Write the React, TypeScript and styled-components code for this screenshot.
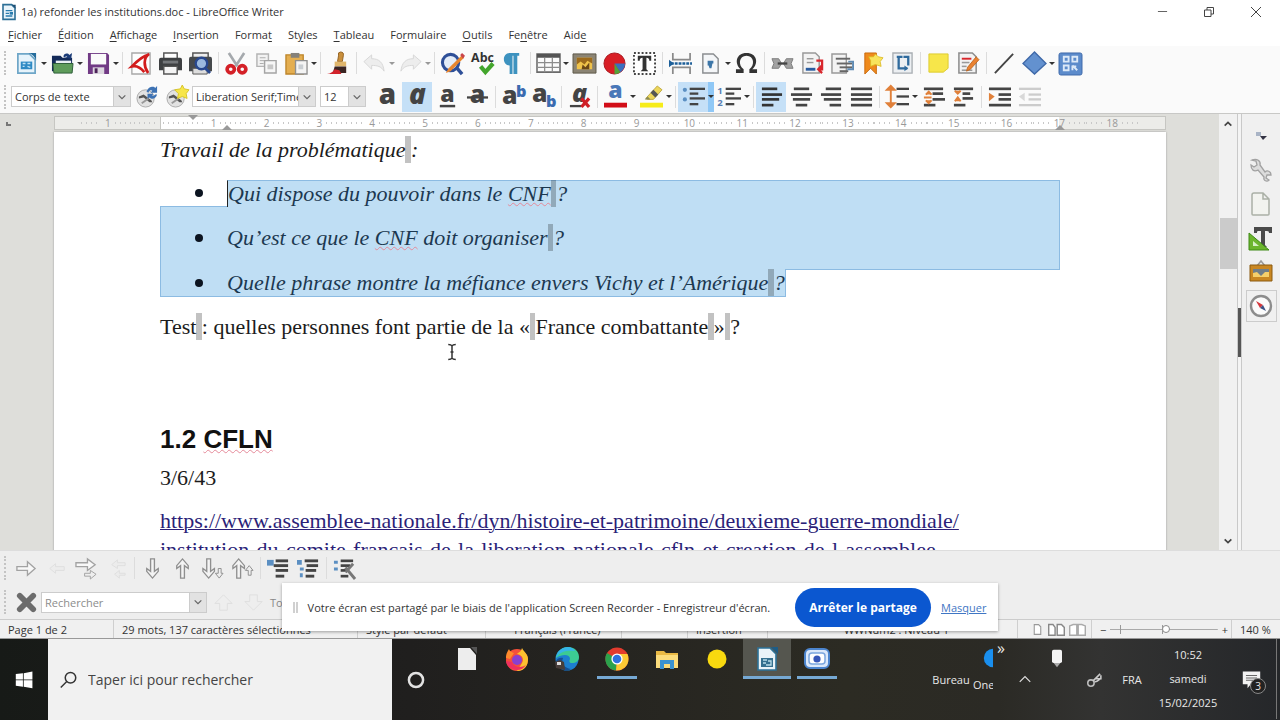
import React from 'react';
import styled, { createGlobalStyle, css } from 'styled-components';

const ui = '"Open Sans", "Noto Sans", sans-serif';

const GlobalStyle = createGlobalStyle`
  * { box-sizing: border-box; }
  body { margin: 0; font-family: ${ui}; font-size: 11px; color: #333; background: #fff; }
  button, input { font: inherit; color: inherit; padding: 0; margin: 0; border: 0; background: none; min-width: 0; }
  p, ul, h1, h2 { margin: 0; padding: 0; }
  svg { display: block; flex: none; overflow: visible; }
`;

/* ---------- icon drawings, all on a 24 x 24 grid ---------- */

const dark = '#444';
const sheet = <path d="M4 2h11l5 5v15H4z" fill="#f4f6f8" stroke="#8a8d90" strokeWidth="1.5" />;
const lines = (rows: number[][], color = dark, width = 2.4) =>
  rows.map(([x1, x2, y]) => <path key={y} d={`M${x1} ${y}H${x2}`} stroke={color} strokeWidth={width} />);
const letter = (size = 23, x = 12, y = 18, fill = dark, italic = false) => (
  <text x={x} y={y} textAnchor="middle" fontFamily="Open Sans, sans-serif" fontWeight="800" fontSize={size}
    fontStyle={italic ? 'italic' : 'normal'} fill={fill}>a</text>
);
const styleDisc = (
  <>
    <circle cx="10" cy="14" r="9" fill="#e2e2e2" stroke="#aaa" />
    <path d="M3 12l5-2 8 6 1 2-3 0-6-5-5 1z" fill="#555" />
    <path d="M6 19l7-5" stroke="#999" strokeWidth="2" />
  </>
);
const arrowDown = 'M10 2h4v13l4-3v3l-6 7-6-7v-3l4 3z';

const icons: Record<string, React.ReactNode> = {
  writer: <><path d="M3 1h13l5 5v17H3z" fill="#e9f4fa" stroke="#2c6f96" strokeWidth="2.4" /><path d="M16 1l6 0v6z" fill="#1d4f74" /><path d="M7 10h10M7 14h5M7 18h10" stroke="#2a7cae" strokeWidth="2" /><path d="M13 12h5v4h-5z" fill="#2a7cae" /></>,
  newDoc: <><path d="M3 2h12l6 6v14H3z" fill="#e6f3fb" stroke="#6ea6c8" strokeWidth="1.8" /><path d="M14 1h8v8c-1-4-4-7-8-8z" fill="#256c9c" /><path d="M6 10h12v8H6z" fill="#2e8ac4" /><path d="M8 12h3M8 15h2M13 12h3M13 15l3 1" stroke="#bfe2f5" strokeWidth="1.4" /></>,
  open: <><path d="M1 4h9l2 2h10v14H1z" fill="#132a58" /><path d="M13 5c0-4 5-4 6-2l3-2-1 6-6-1 2-1c-1-1-2-1-2 1z" fill="#1c3c78" /><path d="M5 9h16v4H5z" fill="#e8eef4" /><path d="M2 12h21l-1 10H3z" fill="#5f9c5b" stroke="#2c5c38" /></>,
  save: <><path d="M1 1h20l2 2v20H1z" fill="#713a85" /><path d="M4 2h16v11H4z" fill="#fafafa" /><path d="M6 16h12v7H6z" fill="#dcd7df" /><path d="M8 17h3v5H8z" fill="#4c2259" /></>,
  pdf: <><path d="M3 1h19v22H3z" fill="#fdfdfd" stroke="#a8a8a8" strokeWidth="1.4" /><path d="M21 2C15 6 15 15 20 22M20 3C15 4 10 8 3 15c4-1 9 1 13 6" fill="none" stroke="#d21c1c" strokeWidth="2.8" /></>,
  print: <><path d="M5 1h14v8H5z" fill="#fff" stroke="#555" strokeWidth="1.5" /><path d="M0 8q0-2 2-2h20q2 0 2 2v11H0z" fill="#3e4042" /><path d="M4 9h16v3H4z" fill="#74777a" /><path d="M5 15h14v8H5z" fill="#f4f4f4" stroke="#555" strokeWidth="1.5" /></>,
  preview: <><path d="M4 1h16v6H4z" fill="#eee" stroke="#555" strokeWidth="1.5" /><path d="M0 7q0-2 2-2h20q2 0 2 2v13H0z" fill="#46494c" /><path d="M4 17h15v6H4z" fill="#ddd" stroke="#555" /><circle cx="13" cy="12" r="6" fill="#9bb9de" stroke="#28488f" strokeWidth="2.4" /><path d="M17 17l5 5" stroke="#28488f" strokeWidth="3" /></>,
  cut: <><path d="M4 1l9 14M20 1l-9 14" stroke="#a5a9ad" strokeWidth="2.8" /><circle cx="6" cy="18" r="3.8" fill="none" stroke="#d42027" strokeWidth="3.8" /><circle cx="18" cy="18" r="3.8" fill="none" stroke="#d42027" strokeWidth="3.8" /></>,
  copy: <><path d="M2 2h12v13H2z" fill="#f2f2f2" stroke="#b4b4b4" strokeWidth="1.5" /><path d="M5 6h6M5 9h6M5 12h4" stroke="#aaa" /><path d="M10 9h12v13H10z" fill="#f6f6f6" stroke="#a4a4a4" strokeWidth="1.5" /><path d="M13 13h6v5h-6z" fill="#c7c7c7" /></>,
  paste: <><path d="M1 3h18v20H1z" fill="#e4ae50" stroke="#bd852a" strokeWidth="1.4" /><path d="M6 1h9v5H6z" fill="#85817a" /><path d="M11 9h12v14H11z" fill="#f4f4f4" stroke="#8f8f8f" strokeWidth="1.4" /><path d="M14 13h5v5h-5z" fill="#c9ced2" /></>,
  brush: <><path d="M14 0q4 0 3 4l-1 6h-5l1-6q-1-4 2-4z" fill="#c98f3c" stroke="#936222" /><path d="M8 10h12v5H8z" fill="#e0b66c" /><path d="M8 15h12v7H6z" fill="#3a2422" /><path d="M0 23q6-1 8-5l5 1 2 4z" fill="#d2232b" /></>,
  undo: <path d="M1 10l8-7v4c8 0 12 4 13 13-3-5-7-6-13-6v4z" fill="#ededed" stroke="#d6d6d6" />,
  redo: <path d="M23 10l-8-7v4C7 7 3 11 2 20c3-5 7-6 13-6v4z" fill="#ededed" stroke="#d6d6d6" />,
  find: <><circle cx="10" cy="11" r="8.5" fill="#e3ecf8" stroke="#2e4f98" strokeWidth="3.2" /><path d="M16 16l6 7" stroke="#2e4f98" strokeWidth="3.6" /><path d="M22 3L8 17l-3 5 5-2L24 6z" fill="#e8862e" /><path d="M20 3l3 4 2-3-3-3z" fill="#c9454a" /></>,
  spell: <><text x="12" y="10" textAnchor="middle" fontFamily="Open Sans, sans-serif" fontWeight="700" fontSize="13" fill="#333">Abc</text><path d="M10 15l5 6 8-9" fill="none" stroke="#43a52c" strokeWidth="4.4" /></>,
  pilcrow: <path d="M19 1v3h-2v19h-4V4h-1v19H9v-9C1 14 1 1 9 1z" fill="#3d92bf" />,
  table: <><path d="M0 2h24v19H0z" fill="#fbfbfb" stroke="#6a6a6a" strokeWidth="1.6" /><path d="M0 2h24v4H0z" fill="#555" /><path d="M0 11h24M0 16h24M8 6v15M16 6v15" stroke="#8c8c8c" strokeWidth="1.3" /></>,
  image: <><path d="M0 2h24v20H0z" fill="#8b8474" stroke="#5d5849" /><path d="M4 6h16v12H4z" fill="#f0c34a" /><path d="M4 6h16v6l-5-3-3 4-4-3-4 3z" fill="#9c6a1c" /><path d="M10 13l3 3 4-5v7H9z" fill="#6b4716" /></>,
  chart: <><circle cx="12" cy="12" r="11" fill="#d81e25" stroke="#a8161c" /><path d="M12 12h11A11 11 0 0 1 18 21z" fill="#3a6fc0" /><path d="M12 12l6 9a11 11 0 0 1-6 2z" fill="#53a53a" /></>,
  textBox: <><path d="M1 1h22v22H1z" fill="#fff" stroke="#444" strokeWidth="2" strokeDasharray="2 2" /><path d="M5 4h14v5h-2c0-2-1-3-3-3v12l2 2H8l2-2V6C8 6 7 7 7 9H5z" fill="#333" /></>,
  pageBreak: <><path d="M4 1v7h18V1M4 23v-7h18v7" fill="none" stroke="#8a8a8a" strokeWidth="1.8" /><path d="M2 12h22" stroke="#1d5f99" strokeWidth="2.4" strokeDasharray="3 1" /><path d="M0 8l5 4-5 4z" fill="#1d5f99" /></>,
  field: <>{sheet}<path d="M9 9h6v3h-1l-1 5h-2l-1-3H9z" fill="#3c76a8" /></>,
  omega: <path d="M1 22v-4h5C-1 12 1 1 12 1s13 11 6 17h5v4h-8v-4c6-4 5-14-3-14s-9 10-3 14v4z" fill="#333" />,
  link: <><path d="M1 7h7l3 5-3 5H1l2-5zM23 7h-7l-3 5 3 5h7l-2-5z" fill="#a2a2a2" stroke="#7c7c7c" /><path d="M7 12h10" stroke="#444" strokeWidth="2.4" /></>,
  footnote: <><path d="M2 1h13l4 4v17H2z" fill="#f3f3f3" stroke="#999" strokeWidth="1.5" />{lines([[6, 13, 7], [6, 13, 11]], '#999', 1.5)}{lines([[5, 15, 18]], '#2a5ca0', 3)}<path d="M16 9h6v9h-3M22 14l-4 4 4 4" fill="none" stroke="#d8262c" strokeWidth="2.4" /></>,
  endnote: <><path d="M1 2h15v20H1z" fill="#f3f3f3" stroke="#999" strokeWidth="1.5" />{lines([[5, 20, 7], [6, 22, 12], [9, 22, 16], [9, 18, 20]], '#666', 2)}<path d="M18 10h5v8h-6" fill="none" stroke="#5f8bb4" strokeWidth="2" /></>,
  bookmark: <><path d="M4 1h12v22l-6-6-6 6z" fill="#ef8a1c" stroke="#c96a0d" /><path d="M15 2l3 3 5 1-3 4 1 5-6-2-5 2 0-6-2-4 5 0z" fill="#f8e45c" stroke="#d9b51c" strokeWidth=".8" /></>,
  crossRef: <><path d="M2 1h20v21H2z" fill="#eceff2" stroke="#a8adb2" strokeWidth="1.4" /><path d="M6 5h6M8 5v12h9M13 5h5v9" fill="none" stroke="#2f6a9d" strokeWidth="2.4" /><path d="M14 14l4 3-4 3z" fill="#2f6a9d" /></>,
  comment: <path d="M2 2h20v15l-5 4H2z" fill="#f7e64a" stroke="#dccb2e" />,
  track: <><path d="M2 1h14l4 4v17H2z" fill="#f3f3f3" stroke="#8e8e8e" strokeWidth="1.6" />{lines([[5, 15, 7]], '#d8262c', 2)}{lines([[5, 13, 11], [5, 10, 15], [5, 16, 19]], '#999', 1.6)}<path d="M20 5l3 3-9 10-4 2 1-4z" fill="#e98231" stroke="#b85e17" strokeWidth=".8" /></>,
  line: <path d="M2 22L21 2" stroke="#444" strokeWidth="2" />,
  shape: <path d="M12 0l12 12-12 11L0 12z" fill="#6391cf" stroke="#3e68a8" strokeWidth="1.4" />,
  form: <><rect x="0" y="1" width="24" height="23" rx="2" fill="#5c8bcb" stroke="#3e69a9" /><path d="M5 5h5v5H5zM5 14h5v5H5zM14 5h5v5h-5zM14 14l5 5M14 19v-4h4" fill="none" stroke="#dce9f8" strokeWidth="2" /></>,

  updateStyle: <>{styleDisc}<path d="M11 7c2-6 8-6 9-4l2-2v7h-7l2-2c-1-1-3-1-4 2zM22 10c-1 4-5 6-8 3l-2 1V9h6l-1 2c1 1 2 0 3-1z" fill="#3d72b4" /></>,
  newStyle: <>{styleDisc}<path d="M17 0l2 4 5 1-3 4 1 5-5-2-5 2 1-5-4-4 6-1z" fill="#f7e64a" stroke="#d6c42b" /></>,
  bold: letter(29, 12, 20),
  italic: letter(29, 12, 20, dark, true),
  underline: <>{letter(24, 12, 18)}<path d="M4 22h16" stroke={dark} strokeWidth="2.6" /></>,
  strike: <>{letter(26, 12, 19)}<path d="M1 13h22" stroke={dark} strokeWidth="2.4" /></>,
  superscript: <>{letter(26, 8, 20)}<text x="20" y="13" textAnchor="middle" fontFamily="Open Sans, sans-serif" fontWeight="800" fontSize="17" fill="#3b6bb0">b</text></>,
  subscript: <>{letter(26, 8, 18)}<text x="20" y="23" textAnchor="middle" fontFamily="Open Sans, sans-serif" fontWeight="800" fontSize="17" fill="#3b6bb0">b</text></>,
  clear: <>{letter(26, 12, 18, dark, true)}<path d="M2 22h12" stroke={dark} strokeWidth="2.4" /><path d="M14 14l8 9M22 14l-8 9" stroke="#cf1f26" strokeWidth="3.4" /></>,
  fontColor: <>{letter(24, 12, 14, '#4a78b8')}<path d="M0 21h24" stroke="#d20d17" strokeWidth="5" /></>,
  highlight: <><path d="M18 1l5 4-9 10H8l-2-1z" fill="#edd65b" stroke="#b39b2d" strokeWidth=".8" /><path d="M14 5l5 5-3 3-5-5z" fill="#555" /><path d="M5 15l3-3 3 3z" fill="#8a8a55" /><path d="M0 21h24" stroke="#f6ec19" strokeWidth="5" /></>,
  bullets: <><circle cx="3" cy="5" r="2.2" fill="#5b8fc2" /><circle cx="3" cy="15" r="2.2" fill="#5b8fc2" />{lines([[8, 24, 4], [8, 17, 9], [8, 24, 14], [8, 17, 20]])}</>,
  numbering: <><text x="2" y="9" textAnchor="middle" fontSize="10" fontWeight="700" fill="#5b7fb4">1</text><text x="2" y="22" textAnchor="middle" fontSize="10" fontWeight="700" fill="#5b7fb4">2</text>{lines([[8, 24, 4], [8, 17, 9], [8, 24, 14], [8, 17, 20]])}</>,
  left: lines([[2, 18, 4], [2, 23, 10], [2, 20, 15], [2, 14, 21]], '#333', 2.8),
  center: lines([[4, 20, 4], [1, 23, 10], [3, 21, 15], [6, 18, 21]], dark, 2.8),
  right: lines([[6, 22, 4], [1, 22, 10], [4, 22, 15], [10, 22, 21]], dark, 2.8),
  justify: lines([[1, 23, 4], [1, 23, 10], [1, 23, 15], [1, 23, 21]], dark, 2.8),
  spacing: <><path d="M5 2v20M1 5l4-4 4 4zM1 19l4 4 4-4z" stroke="#e0803a" strokeWidth="2" fill="#e0803a" />{lines([[11, 24, 4], [11, 24, 12], [11, 24, 20]])}</>,
  incPara: <>{lines([[2, 22, 4], [11, 22, 9], [11, 24, 15], [2, 14, 21]], dark, 2.8)}<path d="M2 13h8M4 10l3-3 3 3M4 16l3 3 3-3" stroke="#e0803a" strokeWidth="2" fill="#e0803a" /></>,
  decPara: <>{lines([[2, 22, 4], [11, 19, 9], [11, 22, 14], [2, 14, 21]], dark, 2.8)}<path d="M3 6l3 3 3-3M3 17l3-4 3 4" stroke="#e0803a" strokeWidth="2" fill="#e0803a" /></>,
  indent: <>{lines([[1, 24, 4], [11, 24, 10], [11, 24, 15], [1, 24, 21]], dark, 2.8)}<path d="M1 8l6 4-6 5z" fill="#e0803a" /></>,
  outdent: <>{lines([[1, 24, 4], [11, 24, 10], [11, 24, 15], [1, 24, 21]], '#ccc')}<path d="M7 8l-6 4 6 5z" fill="#d8d8d8" /></>,

  settings: <><path d="M7 8h5v4H7z" fill="#a9b4c6" /><path d="M11 12h7l-4 4z" fill="#334" /></>,
  wrench: <path d="M3 2l4 1 1 4-3 2-3-2c0 5 3 7 7 5l6 7c-1 4 3 5 5 3l-3-2 1-3 4 0c0-4-4-5-6-3L11 7c1-4-3-7-8-5z" fill="#dcdcdc" stroke="#a2a2a2" strokeWidth="1.3" />,
  page: <path d="M5 1h9l6 6v15q0 1-1 1H4q-1 0-1-1V3q0-2 2-2zM14 1v6h6" fill="#f2f3ef" stroke="#aab0a6" strokeWidth="1.5" />,
  styles: <><path d="M5 1h18v6h-3c0-2-1-2-4-2v14l2 2h-8l2-2V5C8 5 8 5 8 7H5z" fill="#4a4a4a" /><path d="M0 7l20 17H0z" fill="#6cb52d" stroke="#3e8a17" /><path d="M4 15l6 5H4z" fill="#d6efc4" /></>,
  gallery: <><path d="M8 6l4-5 4 5" fill="none" stroke="#999" strokeWidth="1.6" /><path d="M1 5h22v16H1z" fill="#c98722" stroke="#8b5a11" /><path d="M4 9h16v8H4z" fill="#f5cf6b" /><path d="M4 9h16v3l-4 0-4 4-4-4-4 1z" fill="#6f7d88" /></>,
  navigator: <><circle cx="12" cy="12" r="10" fill="#fbfbfb" stroke="#8d8d8d" strokeWidth="2.4" /><path d="M7 7l7 4-3 3z" fill="#d3363c" /><path d="M17 17l-6-3 3-3z" fill="#3d5183" /></>,

  next: <path d="M2 10h11V5l8 7-8 7v-5H2z" fill="#f8f8f8" stroke="#a2a2a2" strokeWidth="1.4" />,
  prev: <path d="M20 10H11V7l-6 5 6 5v-3h9z" fill="#ececec" stroke="#dfdfdf" />,
  nextSub: <><path d="M1 6h12V2l8 6-8 6v-4H1z" fill="#f8f8f8" stroke="#a2a2a2" strokeWidth="1.4" /><path d="M10 17h6v-3l6 4-6 5v-3h-6z" fill="#eee" stroke="#a2a2a2" /></>,
  prevSub: <><path d="M21 6h-8V3L7 8l6 4V9h8z" fill="#ececec" stroke="#dfdfdf" /><path d="M21 17h-6v-3l-5 4 5 4v-3h6z" fill="#ececec" stroke="#dfdfdf" /></>,
  down: <path d={arrowDown} fill="#f4f4f4" stroke="#8f8f8f" strokeWidth="1.4" />,
  up: <path d={arrowDown} transform="rotate(180 12 12)" fill="#f4f4f4" stroke="#8f8f8f" strokeWidth="1.4" />,
  downSub: <><path d="M6 2h4v13l4-3v3l-6 7-6-7v-3l4 3z" fill="#f4f4f4" stroke="#8f8f8f" strokeWidth="1.4" /><path d="M18 12h3v5h2l-4 5-4-5h3z" fill="#eee" stroke="#8f8f8f" /></>,
  upSub: <><path d="M6 22h4V9l4 3V9L8 2 2 9v3l4-3z" fill="#f4f4f4" stroke="#8f8f8f" strokeWidth="1.4" /><path d="M18 19h3v-5h2l-4-5-4 5h3z" fill="#eee" stroke="#8f8f8f" /></>,
  unnumbered: <><path d="M0 3h7v6H0z" fill="#5b8fc2" />{lines([[9, 22, 4], [7, 22, 9], [9, 22, 14], [9, 18, 20]], dark, 3)}</>,
  restart: <><path d="M0 3h5v5H0zM3 11h4v3H3zM3 17h3v4H3z" fill="#5b8fc2" />{lines([[8, 22, 4], [10, 22, 9], [9, 20, 14], [9, 18, 20]], dark, 3)}</>,
  editList: <><path d="M1 4h4v3H1zM1 11h4v3H1z" fill="#5b8fc2" />{lines([[8, 21, 4], [8, 18, 9], [8, 14, 14], [8, 16, 20]], dark, 2.8)}<path d="M13 11l10 12M13 16l8-9" stroke="#777" strokeWidth="3" /></>,
  closeFind: <path d="M5 5l14 14M19 5L5 19" stroke="#6c6c6c" strokeWidth="6" strokeLinecap="round" />,
  findUp: <path d="M12 4l9 9h-5v7H8v-7H3z" fill="#eee" stroke="#dfdfdf" />,
  findDown: <path d="M12 20l9-9h-5V4H8v7H3z" fill="#eee" stroke="#dfdfdf" />,

  blankDoc: <><path d="M3 1h12l6 7v15H3z" fill="#ededed" /><path d="M16 0h6v7z" fill="#555" /></>,
  firefox: <><circle cx="12" cy="13" r="11" fill="#f5503a" /><path d="M12 24c8 0 11-6 11-12 0-5-4-7-6-11-1 4-3 4-5 6 6 1 7 6 5 9z" fill="#fdc02f" /><path d="M1 11c0-5 2-7 3-9 1 3 3 3 5 4l-4 6z" fill="#ff8a2c" /><circle cx="12" cy="13" r="5" fill="#8a3fd0" /><path d="M1 14c1 6 6 9 11 9 4 0 7-2 9-5-4 3-12 3-14-3z" fill="#ef2f5f" /></>,
  edge: <><circle cx="12" cy="12" r="11.5" fill="#1d7fcf" /><path d="M1 11C2 4 7 0 13 0c6 0 11 4 11 10 0 4-3 6-7 6-3 0-3-2-2-4 0-4-6-6-14-1z" fill="#3ccb93" /><path d="M1 11C2 4 7 0 13 0c3 0 6 2 7 4C13 3 5 4 1 11z" fill="#35b5e8" /><path d="M8 11c-2 5 1 10 8 11-7 4-14-1-15-8 1-3 5-4 7-3z" fill="#144f94" /><path d="M0 15l5-2 4 2 1 8-9-2z" fill="#483e3b" /><path d="M2 15h4v3H2z" fill="#ddd" /></>,
  chrome: <><circle cx="12" cy="12" r="11.5" fill="#e33b2e" /><path d="M12 12L2 6a11.5 11.5 0 0 0 9 17.5z" fill="#2ba24c" /><path d="M12 12h11.5A11.5 11.5 0 0 1 11 23.5z" fill="#fcc934" /><path d="M12 7h10.5q1 2 1 5H12z" fill="#fcc934" /><circle cx="12" cy="12" r="5.6" fill="#fff" /><circle cx="12" cy="12" r="4.3" fill="#2f72e0" /></>,
  folder: <><path d="M1 4h8l2 2h12v15H1z" fill="#e9b945" /><path d="M1 8h22v13H1z" fill="#fbdc7c" /><path d="M5 13h14v9h-4v-5H9v5H5z" fill="#3a92d0" /></>,
  sun: <circle cx="12" cy="12" r="9.5" fill="#f8d90f" />,
  writerTask: <><path d="M3 1h12l6 6v16H3z" fill="#eaf3f8" stroke="#2d7298" strokeWidth="1.6" /><path d="M16 0h7v7z" fill="#1e5c86" /><path d="M6 11h12v9H6z" fill="#35708f" /><path d="M8 13h4M8 16h3M13 14h3v4h-5" stroke="#b8dcea" strokeWidth="1.3" fill="none" /></>,
  recorder: <><rect x="0" y="2" width="24" height="19" rx="5" fill="#dbe8fa" stroke="#4c85ce" strokeWidth="2" /><rect x="4" y="6" width="16" height="11" rx="3" fill="#fff" stroke="#7aa5de" strokeWidth="1.5" /><circle cx="12" cy="12" r="3.6" fill="#3656b8" /></>,
  windows: <path d="M1 5l9-1v8H1zM11 4l11-2v10H11zM1 13h9v8l-9-1zM11 13h11v10l-11-2z" fill="#fff" />,
  loupe: <><circle cx="14" cy="9" r="7" fill="none" stroke="#333" strokeWidth="2" /><path d="M9 14l-8 8" stroke="#333" strokeWidth="2" /></>,
  cortana: <circle cx="12" cy="12" r="8.5" fill="none" stroke="#e2e2e2" strokeWidth="3" />,
  chevUp: <path d="M3 17l9-9 9 9" fill="none" stroke="#e0e0e0" strokeWidth="2" />,
  mic: <><rect x="6" y="2" width="12" height="16" rx="2" fill="#f4f4f4" /><path d="M8 18h8l-4 5z" fill="#aaa" /></>,
  pen: <><circle cx="7" cy="17" r="4.5" fill="none" stroke="#bbb" strokeWidth="2.2" /><path d="M10 14L20 4M13 11h8v-5M12 15c4 1 5-2 8-4" stroke="#ccc" strokeWidth="2.2" fill="none" /></>,
  oneDrive: <path d="M24 1A11 11 0 0 0 24 23z" fill="#1a8fee" />,
  notice: <><path d="M1 2h22v16H11l-4 5v-5H1z" fill="#f2f2f2" /><path d="M5 7h14M5 10h14M5 13h9" stroke="#666" strokeWidth="1.3" /></>,
  caretDown: <path d="M4 8l8 8 8-8" fill="none" stroke="#666" strokeWidth="3" />,
  caretUp: <path d="M4 16l8-8 8 8" fill="none" stroke="#444" strokeWidth="4" />,
  scrollDown: <path d="M4 8l8 8 8-8" fill="none" stroke="#444" strokeWidth="4" />,
  min: <path d="M2 12h20" stroke="#555" strokeWidth="2" />,
  restore: <path d="M3 8h13v13H3zM8 8V3h13v13h-5" fill="none" stroke="#444" strokeWidth="2" />,
  close: <path d="M2 2l20 20M22 2L2 22" stroke="#444" strokeWidth="2" />,
  onePage: <path d="M6 3h8l4 4v14H6z" fill="#fff" stroke="#999" strokeWidth="2" />,
  twoPages: <path d="M1 5h6l3 4v11H1zM13 5h6l4 4v11H13z" fill="#fff" stroke="#888" strokeWidth="2" />,
  book: <path d="M1 7l5-2h5v15H1zM13 5h5l5 2v13H13z" fill="#fff" stroke="#aaa" strokeWidth="2" />,
  ibeam: <path d="M7 2q4 0 5 2 1-2 5-2M12 4v16M7 22q4 0 5-2 1 2 5 2M10 12h4" fill="none" stroke="#333" strokeWidth="2" />,
};

const Icon = ({ name, size = 23 }: { name: string; size?: number }) => (
  <svg width={size} height={size} viewBox="0 0 24 24" aria-hidden="true">{icons[name]}</svg>
);

/* ---------- window frame ---------- */

const Screen = styled.div`
  position: relative;
  display: flex;
  flex-direction: column;
  height: 100vh;
  overflow: hidden;
`;
const TitleBar = styled.header`
  display: flex;
  align-items: center;
  gap: 4px;
  height: 23px;
  padding: 0 18px 0 1px;
`;
const Title = styled.h1`
  flex: 1;
  font-size: 11px;
  font-weight: 400;
  white-space: nowrap;
`;
const WindowButtons = styled.div`
  display: flex;
  gap: 35px;
`;
const WindowButton = styled.button`
  display: grid;
  place-items: center;
  width: 12px;
  height: 20px;
`;
const MenuBar = styled.nav`
  display: flex;
  align-items: center;
  gap: 16px;
  height: 23px;
  padding-left: 8px;
`;
const MenuItem = styled.button`
  font-size: 11px;
  white-space: nowrap;
  u { text-underline-offset: 2px; }
`;

/* ---------- toolbars ---------- */

const Toolbar = styled.div<{ $h?: number }>`
  display: flex;
  align-items: center;
  height: ${(p) => p.$h ?? 34}px;
  padding-left: 4px;
  background: #fafafa;
`;
const Grip = styled.span`
  width: 3px;
  height: 24px;
  margin-right: 4px;
  border-left: 2px dotted #c4c4c4;
`;
const ToolButton = styled.button<{ $on?: boolean }>`
  display: grid;
  place-items: center;
  flex: none;
  width: 30px;
  height: 30px;
  ${(p) => p.$on && css`background: #c5e0f7;`}
`;
const ArrowButton = styled.button<{ $on?: boolean; $pale?: boolean }>`
  display: grid;
  place-items: center;
  flex: none;
  width: 6px;
  height: 30px;
  background: ${(p) => (p.$on ? '#90c8f6' : 'none')};
  &::after {
    content: '';
    border: 3px solid transparent;
    border-top-color: ${(p) => (p.$pale ? '#999' : '#333')};
    border-bottom-width: 0;
  }
`;
const Divider = styled.span`
  flex: none;
  width: 6px;
  height: 22px;
  background: linear-gradient(#dcdcdc, #dcdcdc) center / 1px 100% no-repeat;
`;
const ComboBox = styled.span<{ $w: number; $gap?: number }>`
  display: flex;
  flex: none;
  width: ${(p) => p.$w}px;
  height: 21px;
  margin-right: ${(p) => p.$gap ?? 4}px;
  border: 1px solid #ccc;
  background: #fff;
  input { flex: 1; padding-left: 3px; font-size: 11px; }
  input::placeholder { color: #8c8c8c; opacity: 1; }
  button {
    display: grid;
    place-items: center;
    width: 17px;
    background: #e2e2e2;
    border-left: 1px solid #ccc;
  }
`;
const Combo = ({ label, value, width, gap, hint }: { label: string; value?: string; width: number; gap?: number; hint?: string }) => (
  <ComboBox $w={width} $gap={gap}>
    <input aria-label={label} defaultValue={value} placeholder={hint} />
    <button aria-label={`Ouvrir : ${label}`}><Icon name="caretDown" size={10} /></button>
  </ComboBox>
);

/* A trailing "+" adds a drop-down arrow, "*" marks the pressed state, "|" is a divider. */
const Tools = ({ items }: { items: string }) => (
  <>
    {items.split(' ').map((item, i) => {
      if (item === '|') return <Divider key={i} />;
      const name = item.replace(/[+*]/g, '');
      const on = item.includes('*');
      return (
        <React.Fragment key={i}>
          <ToolButton $on={on} aria-label={name} aria-pressed={on || undefined}><Icon name={name} /></ToolButton>
          {item.includes('+') && <ArrowButton $on={on} $pale={name === 'undo' || name === 'redo'} aria-label={`${name} : options`} />}
        </React.Fragment>
      );
    })}
  </>
);

/* ---------- document ---------- */

const Workspace = styled.div`
  display: flex;
  flex: 1;
  min-height: 0;
  border-top: 1px solid #c8c8c6;
`;
const Canvas = styled.main`
  flex: 1;
  display: flex;
  flex-direction: column;
  min-width: 0;
  background: #dededa;
  overflow: hidden;
`;
const RulerBand = styled.div`
  position: relative;
  flex: none;
  height: 17px;
  padding: 2px 53px 1px 54px;
`;
const TabMark = styled.span`
  position: absolute;
  left: 6px;
  top: 8px;
  width: 5px;
  height: 4px;
  border: solid #777;
  border-width: 0 0 2px 2px;
`;
const RulerScale = styled.div`
  display: flex;
  height: 14px;
  padding: 0 calc(100% / 42);
  border: 1px solid #c6c6c2;
  background: linear-gradient(90deg, #ecece9 105px, #c6c6c2 105px 106px, #fff 106px calc(100% - 106px), #ecece9 calc(100% - 106px));
`;
const Tick = styled.span`
  flex: 1;
  display: flex;
  align-items: center;
  gap: 4px;
  font-size: 10px;
  line-height: 12px;
  color: #999;
  &::before, &::after {
    content: '';
    flex: 1;
    height: 2px;
    background: repeating-linear-gradient(90deg, #c8c8c8 0 1px, transparent 1px 5px);
  }
`;
const Marker = styled.span<{ $up?: boolean; $right?: boolean; $at: number }>`
  position: absolute;
  ${(p) => (p.$right ? 'right' : 'left')}: ${(p) => p.$at}px;
  ${(p) => (p.$up ? 'bottom' : 'top')}: 1px;
  border: 5px solid transparent;
  ${(p) => (p.$up ? 'border-top: 0; border-bottom-color: #999;' : 'border-bottom: 0; border-top-color: #999;')}
`;
const Page = styled.article`
  position: relative;
  flex: 1;
  margin: 1px 53px 0 54px;
  padding: 5px 106px 0;
  background: #fff;
  box-shadow: 0 0 2px #999;
  font: 22px/26px "Liberation Serif", serif;
  color: #1c1c1c;
`;
const Paragraph = styled.p<{ $italic?: boolean; $top?: number }>`
  margin-top: ${(p) => p.$top ?? 0}px;
  font-style: ${(p) => (p.$italic ? 'italic' : 'normal')};
  white-space: nowrap;
`;
const Nbsp = styled.span`
  padding: 1px 0;
  background: rgba(0, 0, 0, 0.24);
`;
const Misspelt = styled.span`
  text-decoration: underline wavy #e58a9a 1px;
  text-underline-offset: 1px;
`;
const selectionEdge = '#8cbbe2';
const BulletList = styled.ul`
  margin-top: 17px;
  list-style: none;
  font-style: italic;
  color: #1c3850;
`;
const Bullet = styled.li<{ $part: 'first' | 'middle' | 'last' }>`
  display: flex;
  align-items: center;
  white-space: nowrap;
  ${(p) => p.$part === 'first' && css`height: 27px;`}
  ${(p) => p.$part === 'middle' && css`
    height: 62px;
    background: #bfdef4;
    border: solid ${selectionEdge};
    border-width: 0 1px;
  `}
  ${(p) => p.$part === 'last' && css`
    height: 28px;
    &::after {
      content: '';
      flex: 1;
      align-self: stretch;
      border-top: 1px solid ${selectionEdge};
    }
  `}
`;
const Dot = styled.span<{ $bare?: boolean }>`
  display: flex;
  align-items: center;
  align-self: stretch;
  flex: none;
  width: ${(p) => (p.$bare ? 67 : 66)}px;
  padding-left: ${(p) => (p.$bare ? 35 : 34)}px;
  ${(p) => p.$bare && css`border-bottom: 1px solid ${selectionEdge};`}
  &::before {
    content: '';
    width: 8px;
    height: 8px;
    border-radius: 50%;
    background: #0c1420;
  }
`;
const Selected = styled.span`
  flex: 1;
  height: 27px;
  background: #bfdef4;
  border: 1px solid ${selectionEdge};
  border-bottom: 0;
  border-left-color: #222;
`;
const SelectedEnd = styled.span`
  display: flex;
  align-items: center;
  height: 28px;
  background: #bfdef4;
  border: solid ${selectionEdge};
  border-width: 0 1px 1px;
`;
const Heading = styled.h2`
  margin-top: 83px;
  font: bold 26px/32px "Liberation Sans", sans-serif;
  color: #111;
`;
const DocLink = styled.a`
  display: block;
  margin-top: 15px;
  line-height: 29px;
  color: #2c1f78;
  text-decoration-thickness: 1px;
  white-space: nowrap;
`;
const Pointer = styled.span`
  position: absolute;
  left: 389px;
  top: 211px;
`;

const ScrollTrack = styled.div`
  display: flex;
  flex-direction: column;
  align-items: center;
  width: 18px;
  padding: 5px 0 4px;
  background: #f1f1f1;
`;
const ScrollThumb = styled.span`
  width: 17px;
  height: 51px;
  margin: 89px 0 auto;
  background: #cbcbcb;
`;
const Splitter = styled.div`
  width: 5px;
  padding-top: 194px;
  border: solid #c9c9c9;
  border-width: 0 1px;
  background: #f4f4f4;
  &::after {
    content: '';
    display: block;
    height: 49px;
    background: #555;
  }
`;
const Sidebar = styled.aside`
  display: flex;
  flex-direction: column;
  align-items: center;
  gap: 2px;
  width: 38px;
  padding-top: 6px;
  background: #f0f0f0;
`;
const SideButton = styled.button<{ $on?: boolean }>`
  display: grid;
  place-items: center;
  width: 31px;
  height: 32px;
  border: 1px solid ${(p) => (p.$on ? '#ccc' : 'transparent')};
`;

/* ---------- lower bars ---------- */

const LowerBars = styled.div`
  background: #eee;
  border-top: 1px solid #ddd;
  ${Toolbar} { background: #eee; }
`;
const FindScope = styled.span`
  margin-left: 2px;
  color: #888;
`;
const StatusBar = styled.footer`
  display: flex;
  height: 19px;
  border-top: 1px solid #ccc;
  background: #f0f0f0;
  font-size: 11px;
  line-height: 17px;
  white-space: nowrap;
`;
const StatusCell = styled.span<{ $w?: number; $center?: boolean }>`
  ${(p) => (p.$w ? css`flex: none; width: ${p.$w}px;` : css`flex: 1;`)}
  display: flex;
  align-items: center;
  gap: 4px;
  justify-content: ${(p) => (p.$center ? 'center' : 'flex-start')};
  padding-left: 8px;
  border-right: 1px solid #cfcfcf;
  &:last-child { border-right: 0; }
`;
const ZoomRange = styled.input`
  appearance: none;
  flex: 1;
  height: 12px;
  background:
    linear-gradient(#999, #999) 10px 50% / 1px 9px no-repeat,
    linear-gradient(#999, #999) 52px 50% / 1px 9px no-repeat,
    linear-gradient(#aaa, #aaa) center / 100% 1px no-repeat;
  &::-webkit-slider-thumb {
    appearance: none;
    width: 8px;
    height: 8px;
    border: 1px solid #888;
    border-radius: 50%;
    background: #fff;
  }
`;

const ShareBar = styled.section`
  position: absolute;
  left: 22%;
  right: 22%;
  bottom: 89px;
  display: flex;
  align-items: center;
  gap: 10px;
  height: 48px;
  padding: 0 12px 0 11px;
  background: #fff;
  box-shadow: 0 1px 3px rgba(0, 0, 0, 0.35);
  white-space: nowrap;
`;
const ShareGrip = styled.span`
  width: 5px;
  height: 11px;
  border: solid #d0d0d0;
  border-width: 0 2px;
`;
const ShareText = styled.span`
  flex: 1;
`;
const StopButton = styled.button`
  width: 136px;
  height: 39px;
  border-radius: 20px;
  background: #0b57d0;
  color: #fff;
  font-size: 12px;
  font-weight: 700;
`;
const HideLink = styled.a`
  color: #3f76c4;
  font-size: 11px;
`;

const Taskbar = styled.footer`
  display: flex;
  flex: none;
  height: 82px;
  border-top: 1px solid #999;
  background: linear-gradient(90deg, #171a17, #201f1e 32%, #2c2b23 66%, #2b2a25 78%, #333332 86%, #25272a);
  color: #e8e8e8;
`;
const StartButton = styled.button`
  display: grid;
  place-items: center;
  width: 48px;
`;
const SearchBox = styled.label`
  display: flex;
  align-items: center;
  gap: 10px;
  width: 344px;
  padding-left: 12px;
  background: #f1f1f1;
  input { flex: 1; color: #333; font-size: 14px; }
  input::placeholder { color: #444; opacity: 1; }
`;
const Apps = styled.div`
  display: flex;
  flex: 1;
  gap: 2px;
  padding-left: 3px;
`;
const AppButton = styled.button<{ $open?: boolean; $on?: boolean }>`
  display: grid;
  place-items: center;
  width: 48px;
  height: 40px;
  background: ${(p) => (p.$on ? '#55564f' : 'none')};
  ${(p) => p.$open && css`
    background-image: linear-gradient(#76a9d4, #76a9d4);
    background-size: ${p.$on ? 48 : 40}px 3px;
    background-position: bottom;
    background-repeat: no-repeat;
  `}
`;
const Tray = styled.div`
  display: flex;
  align-items: center;
  height: 80px;
  font-size: 11px;
`;
const TrayCell = styled.div<{ $w: number; $top?: boolean; $start?: boolean }>`
  display: flex;
  flex-direction: column;
  align-items: ${(p) => (p.$start ? 'flex-start' : 'center')};
  justify-content: ${(p) => (p.$top ? 'flex-start' : 'center')};
  flex: none;
  width: ${(p) => p.$w}px;
  height: 80px;
  padding-top: ${(p) => (p.$top ? 9 : 0)}px;
  overflow: hidden;
`;
const TrayLabel = styled.span`
  margin-top: 9px;
  line-height: 16px;
`;
const More = styled.span`
  font-size: 16px;
  line-height: 12px;
  margin-top: -6px;
`;
const Clock = styled(TrayCell)`
  line-height: 24px;
`;
const NoticeCell = styled(TrayCell)`
  position: relative;
`;
const Badge = styled.span`
  position: absolute;
  left: 23px;
  top: 39px;
  width: 16px;
  height: 16px;
  border: 1px solid #888;
  border-radius: 50%;
  background: #222;
  font-size: 10px;
  line-height: 14px;
  text-align: center;
`;
const DesktopEdge = styled.span`
  width: 4px;
  height: 80px;
  border-left: 1px solid #777;
`;

const menus: [string, string, string][] = [
  ['', 'F', 'ichier'], ['', 'É', 'dition'], ['', 'A', 'ffichage'], ['', 'I', 'nsertion'], ['Forma', 't', ''],
  ['St', 'y', 'les'], ['', 'T', 'ableau'], ['Fo', 'r', 'mulaire'], ['', 'O', 'utils'], ['Fe', 'n', 'être'], ['Aid', 'e', ''],
];
const rulerNumbers = ['1', '', ...Array.from({ length: 18 }, (_, i) => String(i + 1))];
const gap = <Nbsp>&nbsp;</Nbsp>;

export default function App() {
  return (
    <>
      <GlobalStyle />
      <Screen>
        <TitleBar>
          <Icon name="writer" size={16} />
          <Title>1a) refonder les institutions.doc - LibreOffice Writer</Title>
          <WindowButtons>
            <WindowButton aria-label="Réduire"><Icon name="min" size={11} /></WindowButton>
            <WindowButton aria-label="Restaurer"><Icon name="restore" size={12} /></WindowButton>
            <WindowButton aria-label="Fermer"><Icon name="close" size={12} /></WindowButton>
          </WindowButtons>
        </TitleBar>
        <MenuBar>
          {menus.map(([a, b, c]) => <MenuItem key={a + b + c}>{a}<u>{b}</u>{c}</MenuItem>)}
        </MenuBar>
        <Toolbar>
          <Grip />
          <Tools items="newDoc+ open+ save+ | pdf print preview | cut copy paste+ | brush | undo+ redo+ | find spell pilcrow | table+ image chart textBox | pageBreak field+ omega | link footnote endnote bookmark crossRef | comment track | line shape+ form" />
        </Toolbar>
        <Toolbar $h={33}>
          <Grip />
          <Combo label="Style de paragraphe" value="Corps de texte" width={120} gap={1} />
          <Tools items="updateStyle newStyle" />
          <Combo label="Nom de police" value="Liberation Serif;Times New Roman" width={124} />
          <Combo label="Taille de police" value="12" width={46} gap={6} />
          <Tools items="bold italic* underline strike | superscript subscript | clear | fontColor+ highlight+ | bullets*+ numbering+ | left* center right justify | spacing+ incPara decPara | indent outdent" />
        </Toolbar>

        <Workspace>
          <Canvas>
            <RulerBand>
              <TabMark />
              <RulerScale>{rulerNumbers.map((n, i) => <Tick key={i}>{n}</Tick>)}</RulerScale>
              <Marker $at={188} />
              <Marker $at={222} $up />
              <Marker $at={154} $up $right />
            </RulerBand>
            <Page>
              <Paragraph $italic>Travail de la problématique{gap}:</Paragraph>
              <BulletList>
                <Bullet $part="first"><Dot $bare /><Selected>Qui dispose du pouvoir dans le <Misspelt>CNF</Misspelt>{gap}?</Selected></Bullet>
                <Bullet $part="middle"><Dot /><span>Qu’est ce que le <Misspelt>CNF</Misspelt> doit organiser{gap}?</span></Bullet>
                <Bullet $part="last"><SelectedEnd><Dot /><span>Quelle phrase montre la méfiance envers Vichy et l’Amérique{gap}?</span></SelectedEnd></Bullet>
              </BulletList>
              <Paragraph $top={17}>Test{gap}: quelles personnes font partie de la «{gap}France combattante{gap}»{gap}?</Paragraph>
              <Heading>1.2 <Misspelt>CFLN</Misspelt></Heading>
              <Paragraph $top={10}>3/6/43</Paragraph>
              <DocLink href="#cfln">
                https://www.assemblee-nationale.fr/dyn/histoire-et-patrimoine/deuxieme-guerre-mondiale/<br />
                institution-du-comite-francais-de-la-liberation-nationale-cfln-et-creation-de-l-assemblee-
              </DocLink>
              <Pointer><Icon name="ibeam" size={18} /></Pointer>
            </Page>
          </Canvas>
          <ScrollTrack>
            <Icon name="caretUp" size={10} />
            <ScrollThumb />
            <Icon name="scrollDown" size={10} />
          </ScrollTrack>
          <Splitter />
          <Sidebar>
            {['settings', 'wrench', 'page', 'styles', 'gallery', 'navigator'].map((n) => (
              <SideButton key={n} $on={n === 'navigator'} aria-label={n}><Icon name={n} size={24} /></SideButton>
            ))}
          </Sidebar>
        </Workspace>

        <LowerBars>
          <Toolbar>
            <Grip />
            <Tools items="next prev nextSub prevSub | down up downSub upSub | unnumbered restart | editList" />
          </Toolbar>
          <Toolbar>
            <Grip />
            <Tools items="closeFind" />
            <Combo label="Rechercher" hint="Rechercher" width={166} gap={1} />
            <Tools items="findUp findDown" />
            <FindScope>Tout rechercher</FindScope>
          </Toolbar>
          <StatusBar>
            <StatusCell $w={114}>Page 1 de 2</StatusCell>
            <StatusCell $w={244}>29 mots, 137 caractères sélectionnés</StatusCell>
            <StatusCell $w={128}>Style par défaut</StatusCell>
            <StatusCell $w={136} $center>Français (France)</StatusCell>
            <StatusCell $w={66} />
            <StatusCell $w={80}>Insertion</StatusCell>
            <StatusCell $center>WWNum2 : Niveau 1</StatusCell>
            <StatusCell $w={74} $center><Icon name="onePage" size={13} /><Icon name="twoPages" size={17} /><Icon name="book" size={17} /></StatusCell>
            <StatusCell $w={140}>−<ZoomRange type="range" aria-label="Zoom" defaultValue={52} />+&nbsp;</StatusCell>
            <StatusCell $w={48}>140 %</StatusCell>
          </StatusBar>
        </LowerBars>

        <Taskbar>
          <StartButton aria-label="Démarrer"><Icon name="windows" size={19} /></StartButton>
          <SearchBox>
            <Icon name="loupe" size={18} />
            <input aria-label="Recherche" placeholder="Taper ici pour rechercher" />
          </SearchBox>
          <StartButton aria-label="Cortana"><Icon name="cortana" size={20} /></StartButton>
          <Apps>
            {['blankDoc', 'firefox', 'edge', 'chrome', 'folder', 'sun', 'writerTask', 'recorder'].map((n) => (
              <AppButton key={n} aria-label={n} $on={n === 'writerTask'} $open={['chrome', 'writerTask', 'recorder'].includes(n)}>
                <Icon name={n} size={24} />
              </AppButton>
            ))}
          </Apps>
          <Tray>
            <TrayCell $w={44}>Bureau</TrayCell>
            <TrayCell $w={20} $top $start>
              <Icon name="oneDrive" size={20} />
              <TrayLabel>OneDrive</TrayLabel>
            </TrayCell>
            <TrayCell $w={16} $top><More>»</More></TrayCell>
            <TrayCell $w={32}><Icon name="chevUp" size={14} /></TrayCell>
            <TrayCell $w={32} $top><Icon name="mic" size={20} /></TrayCell>
            <TrayCell $w={42}><Icon name="pen" size={17} /></TrayCell>
            <TrayCell $w={34}>FRA</TrayCell>
            <Clock $w={78}><span>10:52</span><span>samedi</span><span>15/02/2025</span></Clock>
            <NoticeCell $w={49}><Icon name="notice" size={19} /><Badge>3</Badge></NoticeCell>
            <DesktopEdge />
          </Tray>
        </Taskbar>

        <ShareBar aria-label="Partage d'écran">
          <ShareGrip />
          <ShareText>Votre écran est partagé par le biais de l'application Screen Recorder - Enregistreur d'écran.</ShareText>
          <StopButton>Arrêter le partage</StopButton>
          <HideLink href="#masquer">Masquer</HideLink>
        </ShareBar>
      </Screen>
    </>
  );
}
